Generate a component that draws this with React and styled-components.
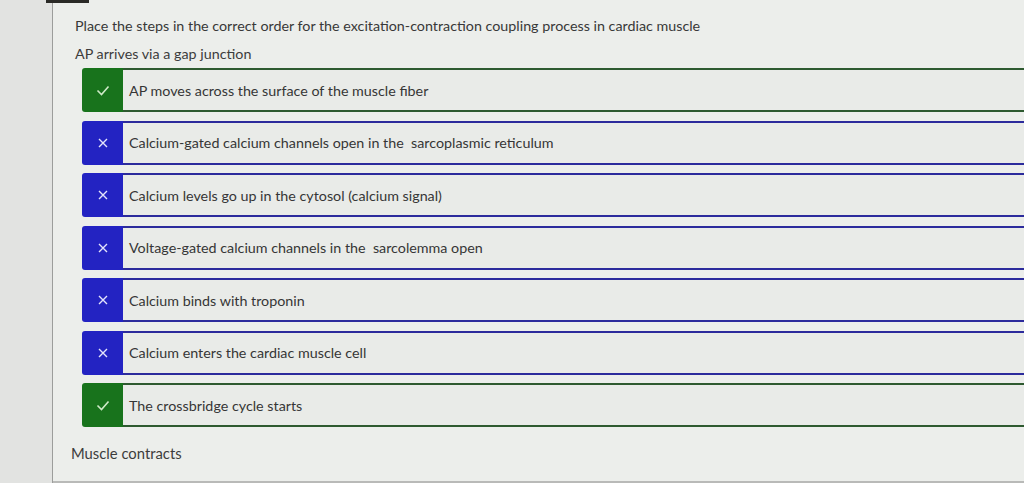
import React from 'react';
import styled, { createGlobalStyle } from 'styled-components';

const GlobalStyle = createGlobalStyle`
  html, body {
    margin: 0;
    padding: 0;
    background: #e3e4e2;
  }
  body {
    font-family: Lato, 'Open Sans', sans-serif;
    color: #3a3a3a;
  }
`;

// --- PALETTE ---
const TONES = {
  correct: { badge: '#18731c', line: '#2e5a30', mark: '#cfe9c8' },
  wrong: { badge: '#2323c2', line: '#2c2b9c', mark: '#e4e4fb' },
};

const STEPS = [
  { text: 'AP moves across the surface of the muscle fiber', ok: true },
  { text: 'Calcium-gated calcium channels open in the  sarcoplasmic reticulum', ok: false },
  { text: 'Calcium levels go up in the cytosol (calcium signal)', ok: false },
  { text: 'Voltage-gated calcium channels in the  sarcolemma open', ok: false },
  { text: 'Calcium binds with troponin', ok: false },
  { text: 'Calcium enters the cardiac muscle cell', ok: false },
  { text: 'The crossbridge cycle starts', ok: true },
];

// --- LAYOUT ---
const Page = styled.div`
  display: flex;
  width: 1024px;
  height: 483px;
  overflow: hidden;
  position: relative;
`;

const Gutter = styled.div`
  width: 52px;
  flex-shrink: 0;
  border-right: 1px solid #9c9d9b;
  background: #e2e3e1;
`;

const Panel = styled.main`
  flex: 1;
  display: flex;
  flex-direction: column;
  padding: 17px 0 0 22px;
  background: #eceeeb;
  border-bottom: 2px solid #b9bab8;
  min-width: 0;
`;

const TopTab = styled.div`
  position: absolute;
  top: 0;
  left: 46px;
  width: 43px;
  height: 3px;
  background: #2a2a26;
`;

const Title = styled.h1`
  margin: 0;
  font-size: 14.3px;
  font-weight: 400;
  line-height: 17px;
  color: #383838;
  white-space: nowrap;
`;

const Anchor = styled.div`
  margin: ${({ $top }) => $top}px 0 0 ${({ $shift }) => $shift || 0}px;
  font-size: ${({ $size }) => $size || 14.3}px;
  line-height: 17px;
  color: #3c3c3c;
`;

const StepList = styled.ol`
  list-style: none;
  margin: 6px 0 0 7px;
  padding: 0;
  display: flex;
  flex-direction: column;
  gap: 8.5px;
`;

const Step = styled.li`
  display: flex;
  height: 44px;
  margin-right: -20px;
`;

const Badge = styled.div`
  width: 41px;
  flex-shrink: 0;
  display: flex;
  align-items: center;
  justify-content: center;
  background: ${({ $tone }) => TONES[$tone].badge};
  border-radius: 3px 0 0 3px;
`;

const Slot = styled.div`
  flex: 1;
  display: flex;
  align-items: center;
  padding-left: 6px;
  border-top: 2px solid ${({ $tone }) => TONES[$tone].line};
  border-bottom: 2px solid ${({ $tone }) => TONES[$tone].line};
  background: #e9ebe8;
  font-size: 14.3px;
  color: #363636;
  white-space: pre;
`;

// --- MARKS ---
const Check = ({ color }) => (
  <svg width="14" height="11" viewBox="0 0 14 11">
    <polyline points="1.5,5.5 5.5,9.5 12.5,1.5" fill="none" stroke={color} strokeWidth="1.6" />
  </svg>
);

const Cross = ({ color }) => (
  <svg width="10" height="10" viewBox="0 0 10 10">
    <path d="M1 1 L9 9 M9 1 L1 9" stroke={color} strokeWidth="1.4" />
  </svg>
);

export default function App() {
  return (
    <Page>
      <GlobalStyle />
      <TopTab />
      <Gutter />
      <Panel>
        <Title>
          Place the steps in the correct order for the excitation-contraction coupling process in cardiac muscle
        </Title>
        <Anchor $top={11}>AP arrives via a gap junction</Anchor>
        <StepList>
          {STEPS.map((step) => {
            const tone = step.ok ? 'correct' : 'wrong';
            return (
              <Step key={step.text}>
                <Badge $tone={tone}>
                  {step.ok ? <Check color={TONES[tone].mark} /> : <Cross color={TONES[tone].mark} />}
                </Badge>
                <Slot $tone={tone}>{step.text}</Slot>
              </Step>
            );
          })}
        </StepList>
        <Anchor $top={18} $shift={-4} $size={14.8}>Muscle contracts</Anchor>
      </Panel>
    </Page>
  );
}
